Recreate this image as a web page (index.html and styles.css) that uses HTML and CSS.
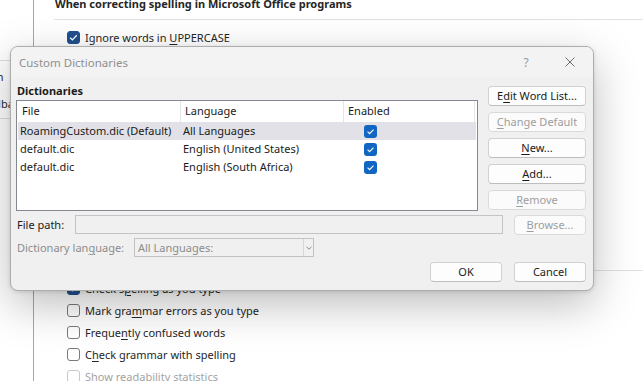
FILE: index.html
```html
<!DOCTYPE html>
<html>

<head>
    <meta charset="utf-8">
    <title>Word Options - Proofing</title>
    <link rel="stylesheet" href="styles.css">
</head>

<body>
    <div class="options">

        <ul class="nav">
            <li>Accessibility</li>
            <li>Advanced</li>
            <li class="sep"></li>
            <li>Customize Ribbon</li>
            <li>Quick Access Toolbar</li>
            <li class="sep"></li>
            <li>Add-ins</li>
            <li>Trust Center</li>
        </ul>

        <div class="content">
            <h3 class="section-title">When correcting spelling in Microsoft Office programs</h3>
            <ul class="checks">
                <li><span class="cb on"><svg viewBox="0 0 13 13"><path d="M3.2 6.7l2.2 2.2 4.4-4.7"/></svg></span><span>Ignore words in <u>U</u>PPERCASE</span></li>
                <li><span class="cb on"><svg viewBox="0 0 13 13"><path d="M3.2 6.7l2.2 2.2 4.4-4.7"/></svg></span><span>Ignore words that contain numbe<u>r</u>s</span></li>
                <li><span class="cb on"><svg viewBox="0 0 13 13"><path d="M3.2 6.7l2.2 2.2 4.4-4.7"/></svg></span><span>Ignore Internet and <u>f</u>ile addresses</span></li>
                <li><span class="cb on"><svg viewBox="0 0 13 13"><path d="M3.2 6.7l2.2 2.2 4.4-4.7"/></svg></span><span>Flag <u>r</u>epeated words</span></li>
                <li><span class="cb"></span><span>Enforce accented uppercase in French</span></li>
                <li><span class="cb"></span><span>Suggest from main dictionary only</span></li>
            </ul>
            <div class="tools">
                <button class="btn">C<u>u</u>stom Dictionaries...</button>
            </div>
            <div class="mode-row">French <u>m</u>odes:</div>
            <div class="mode-row">Spa<u>n</u>ish modes:</div>

            <h3 class="section-title next">When correcting spelling and grammar in Word</h3>
            <ul class="checks">
                <li><span class="cb on"><svg viewBox="0 0 13 13"><path d="M3.2 6.7l2.2 2.2 4.4-4.7"/></svg></span><span>Check s<u>p</u>elling as you type</span></li>
                <li><span class="cb"></span><span>Mark gra<u>m</u>mar errors as you type</span></li>
                <li><span class="cb"></span><span>Freque<u>n</u>tly confused words</span></li>
                <li><span class="cb"></span><span>C<u>h</u>eck grammar with spelling</span></li>
                <li class="disabled"><span class="cb"></span><span>Show readability statistics</span></li>
            </ul>
        </div>
    </div>

    <div class="dialog">
        <div class="dlg-title">
            <span class="dlg-caption">Custom Dictionaries</span>
            <span class="dlg-help">?</span>
            <span class="dlg-close"><svg viewBox="0 0 10 10"><path d="M0.5 0.5l9 9M9.5 0.5l-9 9"/></svg></span>
        </div>

        <div class="dlg-body">
            <div class="dict-area">
                <div class="dict-left">
                    <div class="group-label">Dictionaries</div>
                    <div class="dict-list">
                        <div class="dict-head">
                            <span>File</span>
                            <span>Language</span>
                            <span>Enabled</span>
                        </div>
                        <div class="dict-row selected">
                            <span>RoamingCustom.dic (Default)</span>
                            <span>All Languages</span>
                            <span><i class="dcb"><svg viewBox="0 0 13 13"><path d="M3.6 6.7l2 2 3.9-4.1"/></svg></i></span>
                        </div>
                        <div class="dict-row">
                            <span>default.dic</span>
                            <span>English (United States)</span>
                            <span><i class="dcb"><svg viewBox="0 0 13 13"><path d="M3.6 6.7l2 2 3.9-4.1"/></svg></i></span>
                        </div>
                        <div class="dict-row">
                            <span>default.dic</span>
                            <span>English (South Africa)</span>
                            <span><i class="dcb"><svg viewBox="0 0 13 13"><path d="M3.6 6.7l2 2 3.9-4.1"/></svg></i></span>
                        </div>
                    </div>
                </div>

                <div class="dict-buttons">
                    <button class="btn">E<u>d</u>it Word List...</button>
                    <button class="btn" disabled><u>C</u>hange Default</button>
                    <button class="btn"><u>N</u>ew...</button>
                    <button class="btn"><u>A</u>dd...</button>
                    <button class="btn" disabled><u>R</u>emove</button>
                </div>
            </div>

            <div class="path-row">
                <span class="field-label path-label">File path:</span>
                <span class="textbox"></span>
                <button class="btn browse" disabled><u>B</u>rowse...</button>
            </div>

            <div class="lang-row">
                <span class="field-label lang-label">Dictionary lan<u>g</u>uage:</span>
                <span class="combo">
                    <span class="combo-text">All Languages:</span>
                    <span class="combo-arrow"><svg viewBox="0 0 6 4"><path d="M0.5 0.8l2.5 2.4 2.5-2.4"/></svg></span>
                </span>
            </div>

            <div class="dlg-footer">
                <button class="btn footer-btn">OK</button>
                <button class="btn footer-btn">Cancel</button>
            </div>
        </div>
    </div>
</body>

</html>
```

FILE: styles.css
```css
html,
body {
    padding: 0;
    margin: 0;
    height: 100%;
}

body {
    position: relative;
    overflow: hidden;
    background: #fff;
    font-family: "Noto Sans", "Open Sans", sans-serif;
    font-size: 11px;
    color: #262626;
}

ul {
    list-style: none;
    margin: 0;
    padding: 0;
}

u {
    text-decoration-thickness: 1px;
    text-underline-offset: 2px;
}

/* page behind the dialog */

.options {
    display: flex;
    height: 100%;
}

.nav {
    flex: none;
    width: 33px;
    padding-top: 5px;
    border-right: 1px solid #a6a6a6;
    overflow: hidden;
}

.nav li {
    height: 27px;
    line-height: 27px;
    white-space: nowrap;
    text-indent: -90px;
}

.nav .sep {
    height: 1px;
    margin: 1px 0 2px;
    background: #dcdcdc;
}

.content {
    flex: 1;
    min-width: 0;
    padding-left: 20px;
}

.section-title {
    margin: -5px 0 0;
    padding: 0 0 6px 1px;
    font-size: 11px;
    font-weight: 700;
    line-height: 18px;
    border-bottom: 1px solid #e1e1e1;
}

.section-title.next {
    margin-top: 16px;
}

.checks {
    padding: 6px 0 0 13px;
}

.checks li {
    display: flex;
    align-items: center;
    gap: 5px;
    height: 22px;
    white-space: nowrap;
}

.checks li.disabled {
    color: #a3a3a3;
}

.cb {
    flex: none;
    box-sizing: border-box;
    width: 13px;
    height: 13px;
    border: 1px solid #7a7a7a;
    border-radius: 3px;
    background: #fff;
}

.cb svg {
    display: block;
    width: 13px;
    height: 13px;
    margin: -1px;
    fill: none;
    stroke: #fff;
    stroke-width: 1.3;
}

.cb.on {
    background: #21508f;
    border-color: #21508f;
}

.disabled .cb {
    border-color: #c9c9c9;
}

.tools {
    padding: 5px 0 0 13px;
    height: 23px;
}

.mode-row {
    height: 22px;
    line-height: 22px;
    padding-left: 13px;
}

/* buttons */

.btn {
    box-sizing: border-box;
    height: 20px;
    padding: 0;
    border: 1px solid #d1d1d1;
    border-bottom-color: #bdbdbd;
    border-radius: 4px;
    background: #fdfdfd;
    font-family: inherit;
    font-size: 11px;
    line-height: 18px;
    color: #1b1b1b;
}

.btn[disabled] {
    color: #9e9e9e;
    border-color: #dadada;
    background: #fbfbfb;
}

.tools .btn {
    padding: 0 10px;
}

/* dialog */

.dialog {
    position: absolute;
    left: 10px;
    top: 46px;
    width: 582px;
    height: 243px;
    display: flex;
    flex-direction: column;
    border: 1px solid #adadad;
    border-radius: 8px;
    background: #f0f0f0;
    color: #1b1b1b;
    overflow: hidden;
    box-shadow: 0 14px 44px rgba(0, 0, 0, .26), 0 1px 4px rgba(0, 0, 0, .12);
}

.dlg-title {
    flex: none;
    display: flex;
    align-items: center;
    height: 30px;
    padding-left: 8px;
    background: #f3f3f3;
}

.dlg-caption {
    flex: 1;
    color: #8f8f8f;
    font-size: 11.5px;
}

.dlg-help {
    width: 42px;
    text-align: center;
    color: #9a9a9a;
    font-size: 12px;
}

.dlg-close {
    display: flex;
    justify-content: center;
    width: 46px;
}

.dlg-close svg {
    width: 10px;
    height: 10px;
    fill: none;
    stroke: #6e6e6e;
    stroke-width: 1;
}

.dlg-body {
    flex: 1;
    display: flex;
    flex-direction: column;
    padding: 4px 7px 8px 5px;
}

.dict-area {
    display: flex;
    gap: 10px;
}

.dict-left {
    width: 462px;
}

.group-label {
    padding-left: 1px;
    line-height: 19px;
    font-weight: 700;
}

.dict-list {
    box-sizing: border-box;
    height: 111px;
    padding: 0 1px;
    border: 1px solid #848891;
    background: #fff;
}

.dict-head,
.dict-row {
    display: grid;
    grid-template-columns: 163px 163px 131px;
    white-space: nowrap;
}

.dict-head {
    height: 21px;
    line-height: 20px;
}

.dict-head span {
    padding-left: 4px;
    border-right: 1px solid #e5e5e5;
}

.dict-row {
    height: 18px;
    line-height: 18px;
}

.dict-row span {
    padding-left: 2px;
}

.dict-row span:last-child {
    display: flex;
    align-items: center;
    padding-left: 20px;
}

.dict-row.selected {
    background: #e1e1e7;
}

.dcb {
    display: block;
    width: 13px;
    height: 13px;
    border-radius: 3px;
    background: #1166c2;
}

.dcb svg {
    display: block;
    width: 13px;
    height: 13px;
    fill: none;
    stroke: #fff;
    stroke-width: 1.1;
}

.dict-buttons {
    display: flex;
    flex-direction: column;
    gap: 6px;
    width: 98px;
    margin-top: 5px;
}

.path-row {
    display: flex;
    align-items: center;
    height: 21px;
    margin-top: 3px;
}

.field-label {
    flex: none;
    padding-left: 1px;
    box-sizing: border-box;
    white-space: nowrap;
}

.path-label {
    width: 59px;
}

.textbox {
    flex: 1;
    box-sizing: border-box;
    height: 19px;
    border: 1px solid #c4c4c4;
    background: #f0f0f0;
}

.browse {
    width: 72px;
    margin-left: 11px;
}

.lang-row {
    display: flex;
    align-items: center;
    height: 19px;
    margin-top: 3px;
}

.lang-label {
    width: 118px;
    color: #8c8c8c;
}

.combo {
    display: flex;
    box-sizing: border-box;
    width: 180px;
    height: 19px;
    border: 1px solid #c2c2c2;
    color: #8c8c8c;
}

.combo-text {
    flex: 1;
    padding-left: 3px;
    line-height: 17px;
}

.combo-arrow {
    display: flex;
    align-items: center;
    justify-content: center;
    width: 9px;
    border-left: 1px solid #d6d6d6;
}

.combo-arrow svg {
    width: 6px;
    height: 4px;
    fill: none;
    stroke: #8c8c8c;
    stroke-width: 1;
}

.dlg-footer {
    display: flex;
    justify-content: flex-end;
    gap: 12px;
    margin-top: 5px;
}

.footer-btn {
    width: 72px;
}
```
